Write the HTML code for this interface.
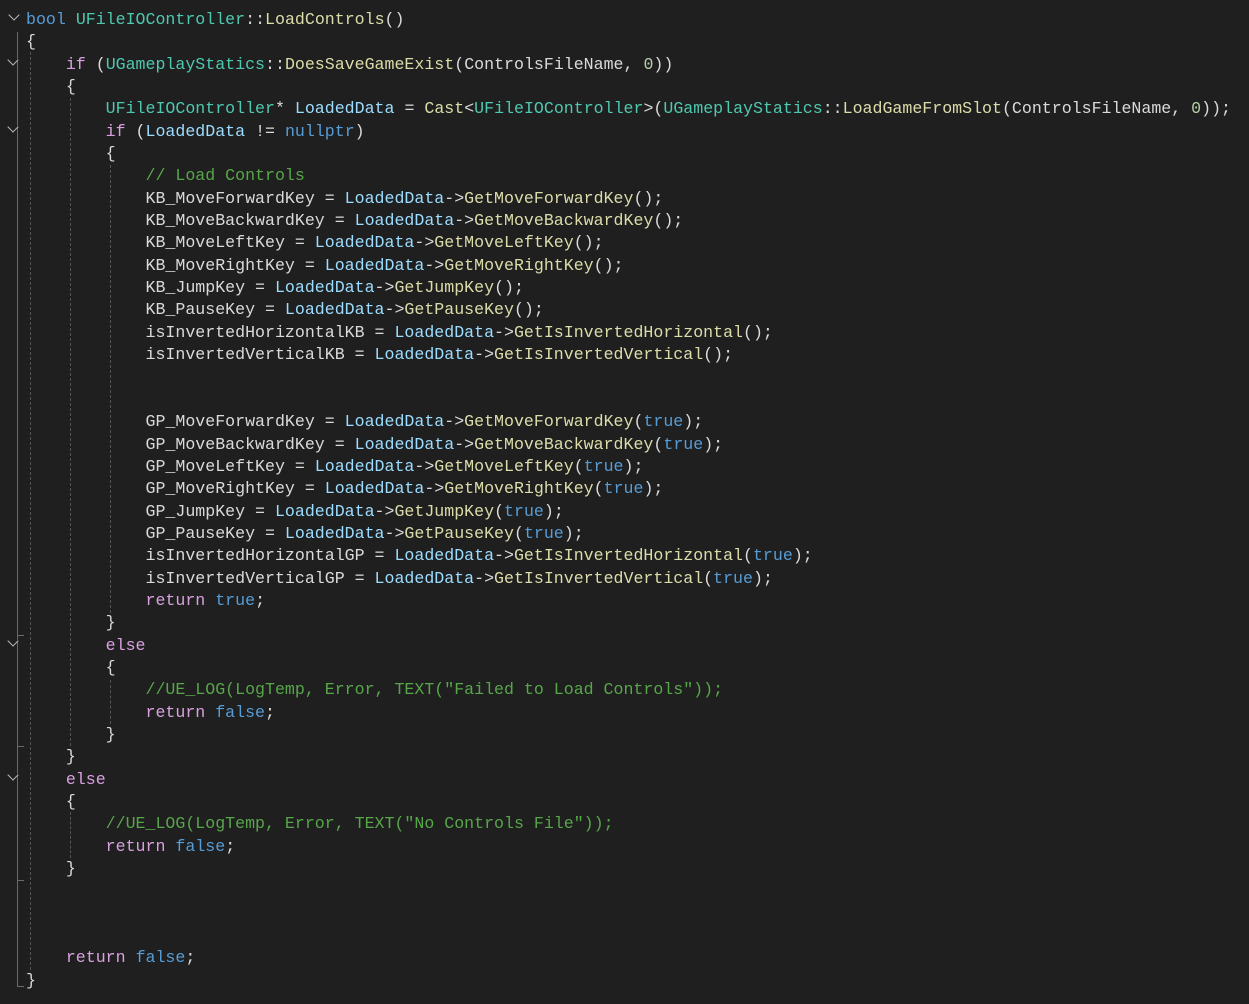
<!DOCTYPE html>
<html><head><meta charset="utf-8"><style>
html,body{margin:0;padding:0;background:#1f1f1f;width:1249px;height:1004px;overflow:hidden}
pre{position:absolute;left:26px;top:9px;margin:0;font-family:"Liberation Mono",monospace;font-size:16.6px;line-height:22.35px;color:#dadada}
.k{color:#569cd6}.c{color:#d8a0df}.t{color:#4ec9b0}.f{color:#dcdcaa}.v{color:#9cdcfe}.g{color:#57a64a}.n{color:#b5cea8}
.d{position:absolute;width:0;border-left:1px dashed #555}
.s{position:absolute;background:#6a6a6a}
.ch{position:absolute;left:9px;width:7px;height:7px;border-right:1.5px solid #bbb;border-bottom:1.5px solid #bbb;transform:rotate(45deg)}
</style></head><body>
<div class="s" style="left:17px;top:32px;width:1px;height:955px"></div>
<div class="s" style="left:17px;top:635px;width:7px;height:1px"></div>
<div class="s" style="left:17px;top:746px;width:7px;height:1px"></div>
<div class="s" style="left:17px;top:880px;width:7px;height:1px"></div>
<div class="s" style="left:17px;top:986px;width:7px;height:1px"></div>
<div class="d" style="left:30px;top:52px;height:918px"></div>
<div class="d" style="left:70px;top:98px;height:648px"></div>
<div class="d" style="left:70px;top:812px;height:46px"></div>
<div class="d" style="left:110px;top:165px;height:448px"></div>
<div class="d" style="left:110px;top:680px;height:44px"></div>
<div class="ch" style="top:11px;left:10px;background:#1f1f1f"></div>
<div class="ch" style="top:56px;background:#1f1f1f"></div>
<div class="ch" style="top:123px;background:#1f1f1f"></div>
<div class="ch" style="top:637px;background:#1f1f1f"></div>
<div class="ch" style="top:771px;background:#1f1f1f"></div>
<pre><span class="k">bool</span> <span class="t">UFileIOController</span>::<span class="f">LoadControls</span>()
{
    <span class="c">if</span> (<span class="t">UGameplayStatics</span>::<span class="f">DoesSaveGameExist</span>(ControlsFileName, <span class="n">0</span>))
    {
        <span class="t">UFileIOController</span>* <span class="v">LoadedData</span> = <span class="f">Cast</span>&lt;<span class="t">UFileIOController</span>&gt;(<span class="t">UGameplayStatics</span>::<span class="f">LoadGameFromSlot</span>(ControlsFileName, <span class="n">0</span>));
        <span class="c">if</span> (<span class="v">LoadedData</span> != <span class="k">nullptr</span>)
        {
            <span class="g">// Load Controls</span>
            KB_MoveForwardKey = <span class="v">LoadedData</span>-&gt;<span class="f">GetMoveForwardKey</span>();
            KB_MoveBackwardKey = <span class="v">LoadedData</span>-&gt;<span class="f">GetMoveBackwardKey</span>();
            KB_MoveLeftKey = <span class="v">LoadedData</span>-&gt;<span class="f">GetMoveLeftKey</span>();
            KB_MoveRightKey = <span class="v">LoadedData</span>-&gt;<span class="f">GetMoveRightKey</span>();
            KB_JumpKey = <span class="v">LoadedData</span>-&gt;<span class="f">GetJumpKey</span>();
            KB_PauseKey = <span class="v">LoadedData</span>-&gt;<span class="f">GetPauseKey</span>();
            isInvertedHorizontalKB = <span class="v">LoadedData</span>-&gt;<span class="f">GetIsInvertedHorizontal</span>();
            isInvertedVerticalKB = <span class="v">LoadedData</span>-&gt;<span class="f">GetIsInvertedVertical</span>();


            GP_MoveForwardKey = <span class="v">LoadedData</span>-&gt;<span class="f">GetMoveForwardKey</span>(<span class="k">true</span>);
            GP_MoveBackwardKey = <span class="v">LoadedData</span>-&gt;<span class="f">GetMoveBackwardKey</span>(<span class="k">true</span>);
            GP_MoveLeftKey = <span class="v">LoadedData</span>-&gt;<span class="f">GetMoveLeftKey</span>(<span class="k">true</span>);
            GP_MoveRightKey = <span class="v">LoadedData</span>-&gt;<span class="f">GetMoveRightKey</span>(<span class="k">true</span>);
            GP_JumpKey = <span class="v">LoadedData</span>-&gt;<span class="f">GetJumpKey</span>(<span class="k">true</span>);
            GP_PauseKey = <span class="v">LoadedData</span>-&gt;<span class="f">GetPauseKey</span>(<span class="k">true</span>);
            isInvertedHorizontalGP = <span class="v">LoadedData</span>-&gt;<span class="f">GetIsInvertedHorizontal</span>(<span class="k">true</span>);
            isInvertedVerticalGP = <span class="v">LoadedData</span>-&gt;<span class="f">GetIsInvertedVertical</span>(<span class="k">true</span>);
            <span class="c">return</span> <span class="k">true</span>;
        }
        <span class="c">else</span>
        {
            <span class="g">//UE_LOG(LogTemp, Error, TEXT("Failed to Load Controls"));</span>
            <span class="c">return</span> <span class="k">false</span>;
        }
    }
    <span class="c">else</span>
    {
        <span class="g">//UE_LOG(LogTemp, Error, TEXT("No Controls File"));</span>
        <span class="c">return</span> <span class="k">false</span>;
    }



    <span class="c">return</span> <span class="k">false</span>;
}</pre>
</body></html>
